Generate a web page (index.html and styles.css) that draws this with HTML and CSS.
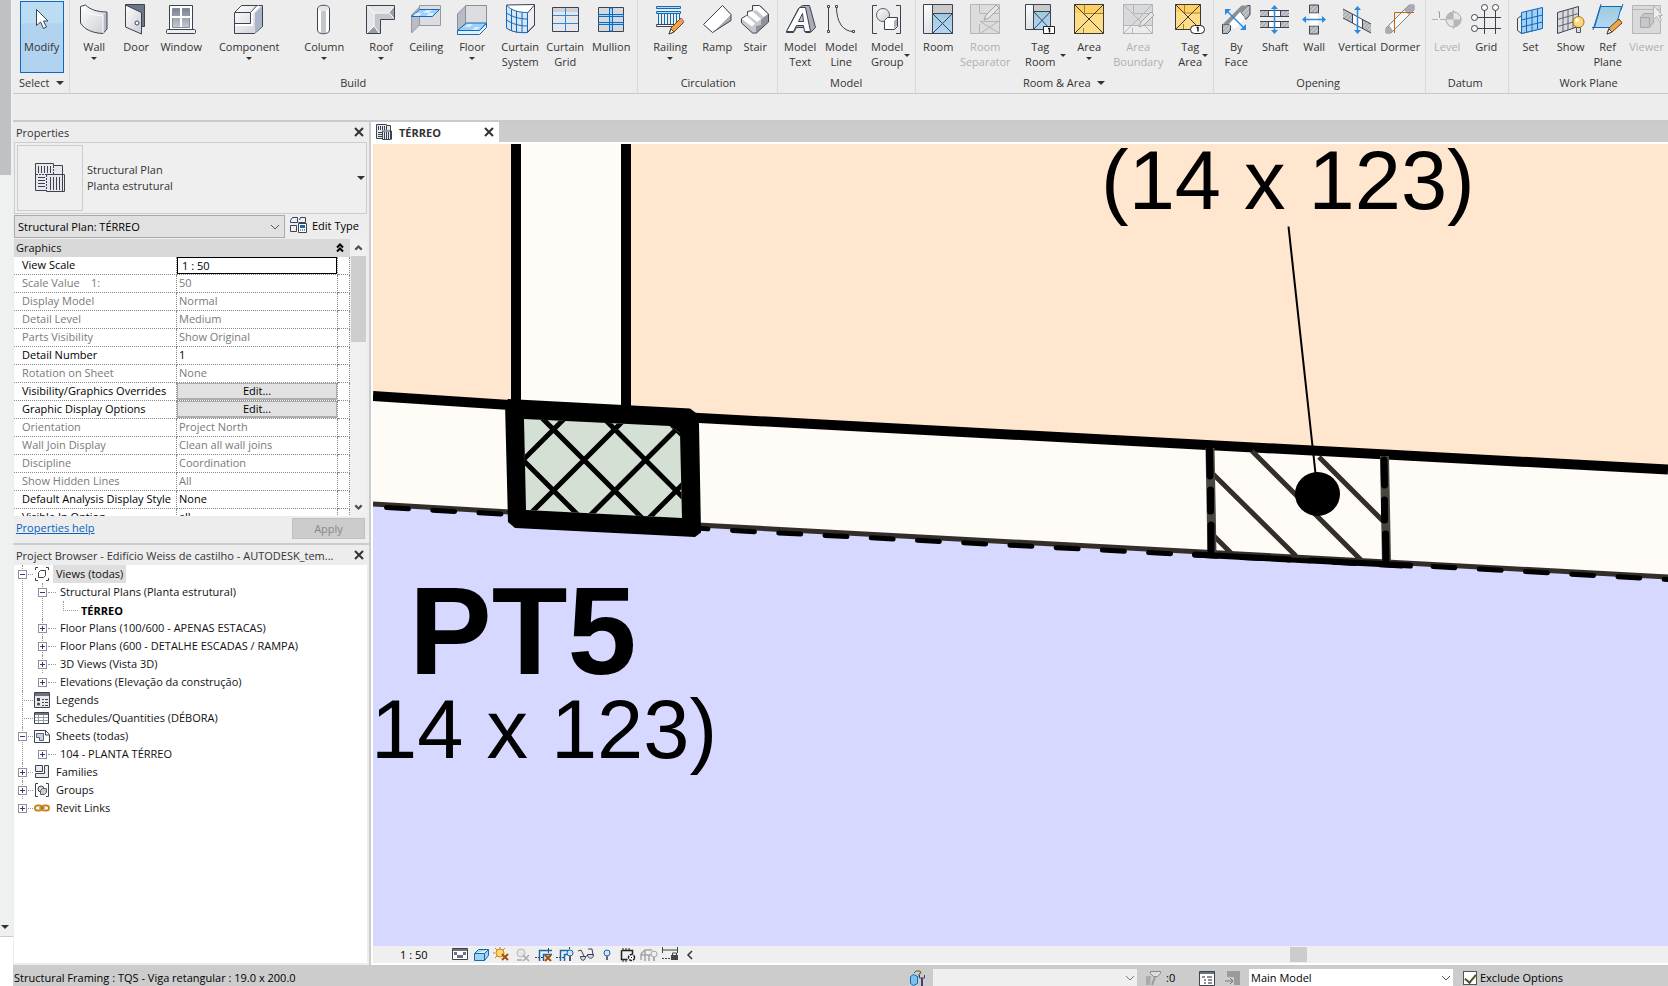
FILE: index.html
```html
<!DOCTYPE html>
<html lang="en">
<head>
	<meta charset="UTF-8">
	<title>Structural Plan: TÉRREO</title>
	<link rel="stylesheet" href="styles.css">
</head>
<body>
<svg class="defs" aria-hidden="true">
	<defs>
		<linearGradient id="gray" x1="0" y1="0" x2="1" y2="1"><stop offset="0" stop-color="#fff"/><stop offset="1" stop-color="#c9ccd3"/></linearGradient>
		<linearGradient id="blue" x1="0" y1="0" x2="0" y2="1"><stop offset="0" stop-color="#9ccbdc"/><stop offset="1" stop-color="#b5d6f6"/></linearGradient>
		<linearGradient id="dark" x1="0" y1="0" x2="0" y2="1"><stop offset="0" stop-color="#78819a"/><stop offset="1" stop-color="#c4c9d2"/></linearGradient>
		<pattern id="hatch" width="3" height="3" patternUnits="userSpaceOnUse" patternTransform="rotate(45)"><rect width="3" height="3" fill="#c3c6ca"/><path d="M0 0V3" stroke="#777b83"/></pattern>
	</defs>
</svg>
<div class="page">
	<div class="sideStrip">
		<div class="sideThumb"></div>
		<div class="sideTrack"><i class="caret"></i></div>
		<div class="sideEnd"></div>
	</div>
	<div class="app">
		<div class="ribbon">
			<section class="panel selectPanel">
				<div class="tools">
					<button class="tool w44 active"><svg class="ico" viewBox="0 0 32 32"><path d="M10.500 5.500v16l4-3.500 3 6.500 3-1.500-3-6h4.500z" fill="#fff" stroke="#3c4250"/></svg>Modify</button>
				</div>
				<button class="panelTitle">Select <i class="caret"></i></button>
			</section>
			<section class="panel">
				<div class="tools">
					<button class="tool w48"><svg class="ico" viewBox="0 0 32 32"><path d="M2.500 2.500l5-1.500c5 5 13 7 21.500 7v17l-4 4.500C15 29 7 26 2.500 19z" fill="url(#gray)"/><path d="M25 11.500l4-3.500v17l-4 4.500z" fill="#b4bac4"/><path d="M2.500 2.500l5-1.500c5 5 13 7 21.500 7v17l-4 4.500C15 29 7 26 2.500 19z" fill="none" stroke="#3c4250"/><path d="M3 3c5 6 12 8.500 22 8.500V29" fill="none" stroke="#fff"/></svg>Wall<i class="drop"></i></button>
					<button class="tool w36"><svg class="ico" viewBox="0 0 32 32"><path d="M5.500.500h19v22h-19z" fill="#6d7686" stroke="#3c4250"/><path d="M5.500 1l16 7.500v21.500l-16-7z" fill="url(#gray)" stroke="#3c4250"/><circle cx="17" cy="19" r="2" fill="#fff" stroke="#3c4250"/></svg>Door</button>
					<button class="tool w54"><svg class="ico" viewBox="0 0 32 32"><path d="M4.500 1.500h23v24h-23z" fill="#fff" stroke="#3c4250"/><path d="M7.500 4.500h17v19h-17z" fill="url(#dark)" stroke="#858b98"/><path d="M16 4v19M7 13h18" stroke="#fff" stroke-width="2"/><rect x="1.500" y="25.500" width="29" height="4" rx="1" fill="#eee" stroke="#3c4250"/></svg>Window</button>
					<button class="tool w82"><svg class="ico" viewBox="0 0 32 32"><path d="M1.500 29.500v-21l7-7h21v21l-8 7z" fill="url(#gray)" stroke="#3c4250"/><path d="M22 9l7-7v20l-7 7z" fill="#a9b4c6"/><path d="M1.500 19.500h16v-11l6-6.500M17 8.500H2" fill="none" stroke="#3c4250"/><path d="M2 21h17V9l7-7" fill="none" stroke="#fff" stroke-width="2"/></svg>Component<i class="drop"></i></button>
					<button class="tool w68"><svg class="ico" viewBox="0 0 32 32"><path d="M9.500 5c0-5 12-5 12 0v21c0 5-12 5-12 0z" fill="#fff" stroke="#3c4250"/><path d="M13 7h5v22h-5z" fill="#c3c7c9"/><ellipse cx="15.500" cy="4.500" rx="5" ry="2.500" fill="#e3e5e9"/></svg>Column<i class="drop"></i></button>
					<button class="tool w46"><svg class="ico" viewBox="0 0 32 32"><path d="M1.500 1.500h28v14h-14v14h-14z" fill="#e4e6ea"/><path d="M24 8.500l5-6v12z" fill="#a4a8b0"/><path d="M9 22l5 7H2z" fill="#858a94"/><path d="M9 9v13l5 7h1V15h14l-5-6.500z" fill="#c3c6cc"/><path d="M24 8.500l5-6v12zM9 22l5 7H2z" fill="#9a9ea7"/><path d="M2 2l7 7h15M9 9v13l-7 7M9 22l5 7M24 8.500l5 6M24 8.500l5-6" stroke="#fff" fill="none"/><path d="M1.500 1.500h28v14h-14v14h-14z" fill="none" stroke="#3c4250"/></svg>Roof<i class="drop"></i></button>
					<button class="tool w44"><svg class="ico" viewBox="0 0 32 32"><path d="M9.500 1.500h21v20h-21z" fill="#dcdde0" stroke="#9699a0"/><path d="M1.500 11l8-8v18l-8 8z" fill="#b8bcc6" stroke="#9699a0"/><path d="M1.500 12.500l8-7h20l-7 7z" fill="#9dd0ff" stroke="#1468b4"/><path d="M6 9h6l-3 3H3zM16 6h6l-3 3h-6zM19 9h5l-2 3h-6z" fill="#d9edff"/></svg>Ceiling</button>
					<button class="tool w48"><svg class="ico" viewBox="0 0 32 32"><path d="M9.500 1.500h21v18h-21z" fill="#dcdde0" stroke="#8b8e95"/><path d="M1.500 10l8-8v17l-8 8z" fill="#b8bcc6" stroke="#8b8e95"/><path d="M1.500 26.500l9-7.500h20l-7 7.500z" fill="#9dd0ff" stroke="#1468b4"/><path d="M1.500 26.500h22l7-7v4l-7 7h-22z" fill="#e2f1ff" stroke="#1468b4"/><path d="M12 20h5l-3 3H9zM19 23h5l-3 3h-5z" fill="#d9edff"/></svg>Floor<i class="drop"></i></button>
					<button class="tool w48"><svg class="ico" viewBox="0 0 32 32"><path d="M2.500 1v23c6 4 13 5 21 4.500l7-7V.500z" fill="#fff" stroke="#3c4250"/><path d="M23.500 9l7-8v20l-7 7z" fill="#eceef1" stroke="#3c4250"/><path d="M2.500 1c5 6 13 7.500 21 7.500v20C15 29 8 28 2.500 24z" fill="#d9e6f2" stroke="#0f69c0"/><path d="M2.500 9c6 4 13 6 21 6M2.500 16c6 4 13 6 21 6M7.500 5v21M12.500 7v21M18 8v20" fill="none" stroke="#0f69c0"/></svg>Curtain<br>System</button>
					<button class="tool w42"><svg class="ico" viewBox="0 0 32 32"><path d="M3.500 3.500h26v24h-26z" fill="#e6e7ea" stroke="#3c4250"/><path d="M4 4h25v4H4z" fill="#d0d1d4"/><path d="M16.500 4v23M4 11.500h25M4 19.500h25" stroke="#2a8ae0"/></svg>Curtain<br>Grid</button>
					<button class="tool w50"><svg class="ico" viewBox="0 0 32 32"><path d="M3.500 3.500h25v24h-25z" fill="#d5d8dc" stroke="#3c4250"/><path d="M3.500 10.500h25v2h-25zM3.500 18.500h25v2h-25zM14.500 4h3v23h-3z" fill="#a6d5f7" stroke="#0f69c0"/></svg>Mullion</button>
				</div>
				<div class="panelTitle">Build</div>
			</section>
			<section class="panel padded">
				<div class="tools">
					<button class="tool w48"><svg class="ico" viewBox="0 0 32 32"><path d="M2.500 2.500h24v2h-24zM2.500 7.500h24v2h-24z" fill="#b5dcfa" stroke="#1468b4"/><path d="M4.500 9v11M7.500 9v11M10.500 9v11M13.500 9v11M16.500 9v11M19.500 9v11M22.500 9v9M25.500 9v8" stroke="#1468b4"/><path d="M2.500 20.500h18v2h-18z" fill="#fff" stroke="#3c4250"/><path d="M15 30l2-6 10-10 3 4-10 10z" fill="#f2a546" stroke="#6d4018"/><path d="M15 30l2-5 3 3z" fill="#fff" stroke="#444"/><path d="M26 15l2-1 2 3-1 2z" fill="#d88"/></svg>Railing<i class="drop"></i></button>
					<button class="tool w46"><svg class="ico" viewBox="0 0 32 32"><path d="M2.500 20.500L21.500 1.500l8.500 9v6l-18 12z" fill="#a9acb4"/><path d="M2.500 20.500L21.500 1.500l8.500 9-18 18z" fill="#fff"/><path d="M2.500 20.500L21.500 1.500l8.500 9v6l-18.500 12z" fill="none" stroke="#3c4250"/></svg>Ramp</button>
					<button class="tool w30"><svg class="ico" viewBox="0 0 32 32"><path d="M2.500 14.500l5-3 5 1v-5l5-1V1.500h5l7 8.500v8l-12 11h-4l-11-10z" fill="#c6c8ce"/><path d="M2 14.500l5-3 9 8-3 3zM8 10l5-3 9 8-4 3zM15 4l4-3 10 9-4 3z" fill="#fff"/><path d="M25 13l4-3v8L17 29v-7l5-1v-5z" fill="#8e929b"/><path d="M2.500 14.500l5-3h1v-4l5-1V1.500h7l9 8.500v8l-12 11h-4l-11-10z" fill="none" stroke="#3c4250"/></svg>Stair</button>
				</div>
				<div class="panelTitle">Circulation</div>
			</section>
			<section class="panel">
				<div class="tools">
					<button class="tool w44"><svg class="ico" viewBox="0 0 32 32"><path d="M2.500 27.500l12-23 4-3h7l6 22-5 5h-5l-1-5h-8l-3 5h-7z" fill="#a7acb7" stroke="#3c4250"/><path d="M2.500 27.500l13-24h6l5 24h-6l-1-6h-7l-3 6z" fill="#fff" stroke="#3c4250"/><path d="M14.500 17.500l4-8 1 8z" fill="#c1c5cc" stroke="#3c4250"/></svg>Model<br>Text</button>
					<button class="tool w38"><svg class="ico" viewBox="0 0 32 32"><path d="M3.500 3v24M11.500 3c0 16 7 24 16 24.500" fill="none" stroke="#3c4250"/><path d="M2.500 1.500h2v2h-2zM2.500 26.500h2v2h-2zM10.500 1.500h2v2h-2zM27.500 26.500h2v2h-2z" fill="#fff" stroke="#3c4250"/></svg>Model<br>Line</button>
					<button class="tool w54 side"><svg class="ico" viewBox="0 0 32 32"><path d="M6 1.500H1.500v28H6M25 1.500h4.500v28H25" fill="none" stroke="#3c4250"/><circle cx="12" cy="11" r="6.500" fill="url(#gray)" stroke="#5b606c"/><path d="M13.500 16.500l3-3h10v9l-3 3h-10z" fill="#fff" stroke="#3c4250"/><path d="M23 17l3-3v8l-3 3z" fill="#aeb3be"/></svg>Model<br>Group<i class="drop"></i></button>
				</div>
				<div class="panelTitle">Model</div>
			</section>
			<section class="panel">
				<div class="tools">
					<button class="tool w44"><svg class="ico" viewBox="0 0 32 32"><path d="M1.500.500h29v29h-29z" fill="url(#gray)" stroke="#3c4250"/><path d="M11 1h19v8H11z" fill="#c9cacc"/><path d="M10.500 1v8M10.500 21v9" stroke="#3c4250"/><path d="M10.500 9.500h20v20h-20z" fill="url(#blue)" stroke="#3c4250"/><path d="M10.500 9.500l20 20M30.500 9.500l-20 20" stroke="#3c4250"/></svg>Room</button>
					<button class="tool w50" disabled><svg class="ico" viewBox="0 0 32 32"><path d="M1.500.500h29v29h-29z" fill="#dcdcdd" stroke="#b4b5b8"/><path d="M10.500 1v8M10.500 20v9M11 9.500h19M11 17.500h19M12 29l18-12M12 18l18 11" stroke="#b4b5b8"/><path d="M15 16l2-5L27 1l3 3-10 10z" fill="#e6e6e6" stroke="#a2a3a6"/></svg>Room<br>Separator</button>
					<button class="tool w60 side"><svg class="ico" viewBox="0 0 32 32"><path d="M1.500.500h25v25h-25z" fill="url(#gray)" stroke="#3c4250"/><path d="M9 1h17v6H9z" fill="#c9cacc"/><path d="M9.500 1v7M9.500 18v8" stroke="#3c4250"/><path d="M9.500 7.500h17v18h-17z" fill="url(#blue)" stroke="#3c4250"/><path d="M9.500 7.500l17 18M26.500 7.500l-17 18" stroke="#3c4250"/><path d="M19.500 22.500h11v7h-11z" fill="#fff" stroke="#222"/><path d="M24 24.500h1.500v4" fill="none" stroke="#111" stroke-width="1.400"/></svg>Tag<br>Room<i class="drop"></i></button>
					<button class="tool w38"><svg class="ico" viewBox="0 0 32 32"><path d="M1.500.500h29v29h-29z" fill="#ffdd87"/><path d="M2 1h28v8H2z" fill="#ffd060"/><path d="M11.500 1v8.500H30M10.500 24v5" stroke="#a3812f" fill="none"/><path d="M1.500.500h29v29h-29zM1.500.500l29 29M30.500.500l-29 29" stroke="#3c3a38" fill="none"/></svg>Area<i class="drop"></i></button>
					<button class="tool w60" disabled><svg class="ico" viewBox="0 0 32 32"><path d="M1.500.500h29v29h-29z" fill="#d8d9da"/><path d="M2 22h28v7H2z" fill="#ececec"/><path d="M1.500.500h29v29h-29zM1.500.500l29 29M30.500.500l-29 29M11.500 1v8.500H30M2 21.500h28M10.500 24v5" stroke="#b4b5b8" fill="none"/><path d="M17 23l2-5L29 8l3 3-10 10z" fill="#e6e6e6" stroke="#a2a3a6"/></svg>Area<br>Boundary</button>
					<button class="tool w44 side"><svg class="ico" viewBox="0 0 32 32"><path d="M1.500.500h25v25h-25z" fill="#ffdd87"/><path d="M2 1h24v7H2z" fill="#ffd060"/><path d="M10.500 1v8H26M9.500 20v5" stroke="#a3812f" fill="none"/><path d="M1.500.500h25v25h-25zM1.500.500l25 25M26.500.500l-25 25" stroke="#3c3a38" fill="none"/><rect x="16.500" y="21.500" width="14" height="8" rx="4" fill="#fff" stroke="#222"/><path d="M22.500 23.500H24v4" fill="none" stroke="#111" stroke-width="1.400"/></svg>Tag<br>Area<i class="drop"></i></button>
				</div>
				<button class="panelTitle">Room &amp; Area <i class="caret"></i></button>
			</section>
			<section class="panel openingPanel">
				<div class="tools">
					<button class="tool w42"><svg class="ico" viewBox="0 0 32 32"><path d="M2.500 20.500h8v6l-3 3h-5zM21 8.500l6-7h3v9l-4 5z" fill="url(#hatch)" stroke="#3c4250"/><path d="M2.500 20.500l19-19h7l-18 19z" fill="#8c9097"/><path d="M9 20L20 8l5 6-10 11z" fill="#fff"/><path d="M7 7l17 17" stroke="#2a8ae0" stroke-width="1.500"/><path d="M5 5h6l-6 6zM26 26h-6l6-6z" fill="#2a8ae0"/></svg>By<br>Face</button>
					<button class="tool w36"><svg class="ico" viewBox="0 0 32 32"><path d="M1 6.500h8v6H1zM22 6.500h8v6h-8zM1 17.500h8v6H1zM22 17.500h8v6h-8z" fill="url(#hatch)"/><path d="M9 6h13v7H9zM9 17h13v7H9z" fill="#fff"/><path d="M1 6.500h29M1 12.500h29M1 17.500h29M1 23.500h29M9.500 6v7M21.500 6v7M9.500 17v7M21.500 17v7" stroke="#3c4250"/><path d="M15.500 3v24" stroke="#2a8ae0" stroke-width="1.500"/><path d="M12 5l3.500-4L19 5zM12 26l3.500 4 3.500-4z" fill="#2a8ae0"/></svg>Shaft</button>
					<button class="tool w42"><svg class="ico" viewBox="0 0 32 32"><path d="M11.500 1v8h9V1zM11.500 30v-8h9v8z" fill="url(#hatch)" stroke="#3c4250"/><path d="M12 9.500h8v12h-8z" fill="#fff"/><path d="M6 15.500h20" stroke="#2a8ae0" stroke-width="1.500"/><path d="M8 12l-4 3.500L8 19zM24 12l4 3.500L24 19z" fill="#2a8ae0"/></svg>Wall</button>
					<button class="tool w44"><svg class="ico" viewBox="0 0 32 32"><path d="M2 5l9 5v9l-9-5zM21 15l9 5v9l-9-5z" fill="url(#hatch)"/><path d="M11 10l10 5v9l-10-5z" fill="#fff"/><path d="M2 5l28 15M2 14l28 15M11.500 10v9M21.500 15v9" stroke="#3c4250"/><path d="M16.500 4v24" stroke="#2a8ae0" stroke-width="1.500"/><path d="M13 6l3.500-4L20 6zM13 26l3.500 4 3.500-4z" fill="#2a8ae0"/></svg>Vertical</button>
					<button class="tool w42"><svg class="ico" viewBox="0 0 32 32"><path d="M2 29v-5L25 1h5v5L7 29z" fill="#f8f8f8" stroke="#7d8087"/><path d="M2 24l3-3 4 6-2 2H2zM20 6l5-5h5v5l-5 5z" fill="#a9acb2"/><path d="M10.500 29V8.500H30" fill="none" stroke="#c0680e"/></svg>Dormer</button>
				</div>
				<div class="panelTitle">Opening</div>
			</section>
			<section class="panel datumPanel">
				<div class="tools">
					<button class="tool w42" disabled><svg class="ico" viewBox="0 0 32 32"><path d="M1 15.500h30M22.500 6v19" stroke="#b0b1b4" stroke-dasharray="6 2"/><circle cx="22.500" cy="15.500" r="7.500" fill="#e6e6e6" stroke="#a5a6a9"/><path d="M22.500 8a7.500 7.500 0 0 0-7.500 7.500h15a7.500 7.500 0 0 1-7.500 7.500z" fill="#b5b6b9"/><path d="M7 8h1.500v6" fill="none" stroke="#9a9b9e"/></svg>Level</button>
					<button class="tool w36"><svg class="ico" viewBox="0 0 32 32"><path d="M14.500 6v24M25.500 6v24M7 13.500h24M7 24.500h24" stroke="#3c4250"/><g fill="#fff" stroke="#3c4250"><circle cx="14.500" cy="3.500" r="3"/><circle cx="25.500" cy="3.500" r="3"/><circle cx="4.500" cy="13.500" r="3"/><circle cx="4.500" cy="24.500" r="3"/></g></svg>Grid</button>
				</div>
				<div class="panelTitle">Datum</div>
			</section>
			<section class="panel workPanel">
				<div class="tools">
					<button class="tool w42"><svg class="ico" viewBox="0 0 32 32"><path d="M2.500 26.500v-12l4-3 20-6v19l-20 5z" fill="#eee" stroke="#3c4250"/><path d="M6.500 8.500l21-5v21l-21 5z" fill="#a2cff2" stroke="#0f69c0"/><path d="M6.500 16l21-5M6.500 23l21-5M11.500 7v21M17 6v21M22.500 5v21" stroke="#0f69c0"/></svg>Set</button>
					<button class="tool w38"><svg class="ico" viewBox="0 0 32 32"><path d="M2.500 8.500l21-6v20l-21 7z" fill="#d9dadd" stroke="#3c4250"/><path d="M2.500 15.500l21-6M2.500 22.500l21-6M8 7v21M13 5v21M18 4v20" stroke="#5f646f"/><circle cx="23.500" cy="18" r="5.500" fill="#ffd774" stroke="#a87618"/><circle cx="22" cy="16" r="2" fill="#fff"/><path d="M21.500 23.500h4v5h-4z" fill="#ddd" stroke="#555"/></svg>Show</button>
					<button class="tool w36"><svg class="ico" viewBox="0 0 32 32"><path d="M8.500 2.500h21l-6 21h-21z" fill="url(#blue)" stroke="#0f69c0"/><path d="M9 0L1 26M31 0l-2 6M0 23.500h6" stroke="#1468b4"/><path d="M15 30l2-6 10-9 3 4-10 9z" fill="#f2a546" stroke="#6d4018"/><path d="M15 30l2-5 3 3z" fill="#fff" stroke="#444"/></svg>Ref<br>Plane</button>
					<button class="tool w42" disabled><svg class="ico" viewBox="0 0 32 32"><path d="M1.500 1.500h28v28h-28z" fill="#dadadb" stroke="#b5b6b9"/><path d="M2 5.500h27" stroke="#b5b6b9"/><path d="M9.500 13.500l3-4h10v9l-4 5h-9z" fill="#c6c7ca" stroke="#a5a6a9"/><path d="M9.500 13.500h9v9" fill="none" stroke="#a5a6a9"/><path d="M22.500 1.500v14l3-3 3 5 2-1-3-5h4z" fill="#eee" stroke="#b5b6b9"/></svg>Viewer</button>
				</div>
				<div class="panelTitle">Work Plane</div>
			</section>
		</div>
		<div class="optionsBar"></div>

		<div class="main">
			<aside class="dock">
				<div class="properties">
					<div class="dockTitle"><span>Properties</span><button class="close" aria-label="Close Properties"><svg viewBox="0 0 10 10"><path d="M1 1l8 8M9 1L1 9"/></svg></button></div>
					<div class="typeBox">
						<div class="thumb"><svg viewBox="0 0 32 32"><path d="M1.500 1.500h18v2h9v26h-16v-1h-11z" fill="#e7e8ee" stroke="#3c4250"/><path d="M4.500 4v7M7.500 4v7M10.500 4v7M13.500 4v7M16.500 4v7M4 15.500h7M4 18.500h7M4 21.500h7M4 24.500h7M16.500 15v13M19.500 15v13M22.500 15v13M25.500 15v13M28.500 15v13M12 12.500h18.500v17H13" fill="none" stroke="#3c4250"/><path d="M2 12.500h10M12.500 13v16M19.500 4v9" fill="none" stroke="#3c4250" stroke-dasharray="2 1"/></svg></div>
						<div class="typeName">Structural Plan<br>Planta estrutural</div>
						<i class="caret"></i>
					</div>
					<div class="filterRow">
						<select class="filter" aria-label="Properties filter"><option>Structural Plan: TÉRREO</option></select>
						<button class="editType"><svg viewBox="0 0 17 17"><path d="M.500 3.500l2-3h5v5h-7zM9.500 3l1-2.500h5v5h-7M.500 8.500h6v6h-6z" fill="#eef" stroke="#3c4250"/><path d="M8.500 6.500h8v9h-8z" fill="#fff" stroke="#3c4250"/><path d="M10 8h5v3h-5z" fill="#1468c0"/><path d="M10 13h1M12 13h1M14 13h1" stroke="#222"/></svg>Edit Type</button>
					</div>
					<div class="gridArea">
						<div class="gridScroll">
							<table class="propTab">
								<colgroup><col><col class="valueCol"><col class="moreCol"></colgroup>
								<thead>
									<tr><th colspan="3"><div class="groupHead">Graphics<svg viewBox="0 0 8 10"><path d="M1 4.500l3-3 3 3M1 8.500l3-3 3 3"/></svg></div></th></tr>
								</thead>
								<tbody>
									<tr class="on"><td><label for="viewScale">View Scale</label></td><td class="field"><input id="viewScale" type="text" value="1 : 50"></td><td></td></tr>
									<tr><td>Scale Value &nbsp;&nbsp; 1:</td><td>50</td><td></td></tr>
									<tr><td>Display Model</td><td>Normal</td><td></td></tr>
									<tr><td>Detail Level</td><td>Medium</td><td></td></tr>
									<tr><td>Parts Visibility</td><td>Show Original</td><td></td></tr>
									<tr class="on"><td>Detail Number</td><td>1</td><td></td></tr>
									<tr><td>Rotation on Sheet</td><td>None</td><td></td></tr>
									<tr class="on"><td>Visibility/Graphics Overrides</td><td class="field"><button class="editBtn">Edit...</button></td><td></td></tr>
									<tr class="on"><td>Graphic Display Options</td><td class="field"><button class="editBtn">Edit...</button></td><td></td></tr>
									<tr><td>Orientation</td><td>Project North</td><td></td></tr>
									<tr><td>Wall Join Display</td><td>Clean all wall joins</td><td></td></tr>
									<tr><td>Discipline</td><td>Coordination</td><td></td></tr>
									<tr><td>Show Hidden Lines</td><td>All</td><td></td></tr>
									<tr class="on"><td>Default Analysis Display Style</td><td>None</td><td></td></tr>
									<tr class="on"><td>Visible In Option</td><td>all</td><td></td></tr>
								</tbody>
							</table>
						</div>
						<div class="scrollBar">
							<svg viewBox="0 0 16 16"><path d="M5 10l3-3 3 3"/></svg>
							<div class="scrollThumb"></div>
							<svg viewBox="0 0 16 16"><path d="M5 6l3 3 3-3"/></svg>
						</div>
					</div>
					<div class="propFoot"><a href="#">Properties help</a><button class="apply" disabled>Apply</button></div>
				</div>

				<div class="browser">
					<div class="dockTitle"><span>Project Browser - Edifício Weiss de castilho - AUTODESK_tem...</span><button class="close" aria-label="Close Project Browser"><svg viewBox="0 0 10 10"><path d="M1 1l8 8M9 1L1 9"/></svg></button></div>
					<ul class="tree">
						<li>
							<div class="row"><i class="toggle open"></i><i class="dots"></i><svg viewBox="0 0 16 16"><path d="M4 1.500H1.500V4M12 1.500h2.500V4M4 14.500H1.500V12M12 14.500h2.500V12M4.500 6.500l2-2h5v5l-2 2h-5z" fill="none" stroke="#3c4250"/></svg><span class="picked">Views (todas)</span></div>
							<ul>
								<li>
									<div class="row"><i class="toggle open"></i><i class="dots"></i><span>Structural Plans (Planta estrutural)</span></div>
									<ul class="leaf"><li><div class="row"><i class="elbow"></i><b>TÉRREO</b></div></li></ul>
								</li>
								<li><div class="row"><i class="toggle"></i><i class="dots"></i><span>Floor Plans (100/600 - APENAS ESTACAS)</span></div></li>
								<li><div class="row"><i class="toggle"></i><i class="dots"></i><span>Floor Plans (600 - DETALHE ESCADAS / RAMPA)</span></div></li>
								<li><div class="row"><i class="toggle"></i><i class="dots"></i><span>3D Views (Vista 3D)</span></div></li>
								<li><div class="row"><i class="toggle"></i><i class="dots"></i><span>Elevations (Elevação da construção)</span></div></li>
							</ul>
						</li>
						<li><div class="row single"><i class="dots"></i><svg viewBox="0 0 16 16"><path d="M.500.500h15v15H.500z" fill="#e9eaec" stroke="#3c4250"/><path d="M1 1h14v3H1z" fill="#6c727e"/><path d="M3 6h3v3H3z" fill="#3c4250"/><circle cx="4.500" cy="12" r="1.500" fill="#3c4250"/><path d="M8 7.500h2M11 7.500h3M8 10.500h2M11 10.500h3M8 13.500h2M11 13.500h3" stroke="#3c4250"/></svg><span>Legends</span></div></li>
						<li><div class="row single"><i class="dots"></i><svg viewBox="0 0 16 16"><path d="M.500 2.500h14v11H.500z" fill="#fff" stroke="#3c4250"/><path d="M1 3h13v2H1z" fill="#6c727e"/><path d="M1 7.500h13M1 10.500h13M4.500 5v8M9.500 5v8" stroke="#9a9ea7"/></svg><span>Schedules/Quantities (DÉBORA)</span></div></li>
						<li>
							<div class="row"><i class="toggle open"></i><i class="dots"></i><svg viewBox="0 0 16 16"><path d="M.500 2.500h11l4 4v8H.500z" fill="#fff" stroke="#3c4250"/><path d="M11.500 2v5H15" fill="none" stroke="#3c4250"/><path d="M2.500 5.500h7v7h-4v-3h-3z" fill="#c7d3e6" stroke="#5b606c"/></svg><span>Sheets (todas)</span></div>
							<ul><li><div class="row"><i class="toggle"></i><i class="dots"></i><span>104 - PLANTA TÉRREO</span></div></li></ul>
						</li>
						<li><div class="row"><i class="toggle"></i><i class="dots"></i><svg viewBox="0 0 16 16"><path d="M1.500 1.500h7v6h-7zM10.500 1.500h4v12h-13v-4h9z" fill="#e9eaec" stroke="#3c4250"/></svg><span>Families</span></div></li>
						<li><div class="row"><i class="toggle"></i><i class="dots"></i><svg viewBox="0 0 16 16"><path d="M4 1.500H1.500v13H4M12 1.500h2.500v13H12" fill="none" stroke="#3c4250"/><circle cx="7" cy="7" r="3" fill="#ddd" stroke="#3c4250"/><path d="M6.500 8.500l2-2h4v4l-2 2h-4z" fill="#c9ccd3" stroke="#5b606c"/></svg><span>Groups</span></div></li>
						<li><div class="row"><i class="toggle"></i><i class="dots"></i><svg viewBox="0 0 16 16"><g fill="none" stroke="#c9851a" stroke-width="2"><rect x="1" y="5.500" width="7" height="5" rx="2.500"/><rect x="8" y="5.500" width="7" height="5" rx="2.500"/></g><path d="M5 8h6" stroke="#7c4f0c"/></svg><span>Revit Links</span></div></li>
					</ul>
				</div>
			</aside>

			<div class="view">
				<div class="tabBar">
					<div class="tab"><svg viewBox="0 0 16 16"><path d="M.500.500h10v1h4v14h-8v-1h-6z" fill="#e7e8ee" stroke="#3c4250"/><path d="M2.500 2v4M4.500 2v4M6.500 2v4M8.500 2v4M10.500 2v4M2 8.500h4M2 10.500h4M2 12.500h4M6.500 7h9v8.500M6.500 7v8M8.500 8v7M10.500 8v7M12.500 8v7" fill="none" stroke="#3c4250"/></svg><b>TÉRREO</b><button class="close" aria-label="Close view"><svg viewBox="0 0 10 10"><path d="M1 1l8 8M9 1L1 9"/></svg></button></div>
				</div>
				<svg class="drawing" viewBox="373 144 1295 802" preserveAspectRatio="xMinYMin slice">
					<!-- slabs -->
					<path class="slabTop" d="M373 144h1295v326L373 396z"/>
					<path class="slabBottom" d="M373 504l327 22 968 52v368H373z"/>
					<!-- beams -->
					<path class="beam" d="M373 396l325 22 970 52v108l-968-52-327-22zM516 144h110v270H516z"/>
					<path class="edge" d="M516 144v262M626 144v265M373 396l137 9M690 417.500l978 52"/>
					<path class="faint" d="M373 504l137 8M698 525l970 52"/>
					<path class="dash" d="M386.500 507.500l130 7.500M686 527.500l24 1.500M732.500 530.500l680 36"/>
					<path class="dash" d="M1433 566.500l235 13"/>
					<!-- pillar PT5 -->
					<path d="M505 403l3-4 182 9.500 8 6 1 10 2 108-6 4.500-180-9-7-6z"/>
					<clipPath id="pillar"><path d="M524 419l146 7 10 7 2 85-156-8z"/></clipPath>
					<g clip-path="url(#pillar)">
						<path class="pillarFill" d="M520 410h170v120H520z"/>
						<path class="cross" d="M463 400l140 140M524 400l140 140M585.500 400l140 140M647 400l140 140M583 400L443 540M644 400L504 540M705.500 400l-140 140M767 400L627 540"/>
					</g>
					<!-- hatched opening -->
					<path class="hatchLine" d="M1212 473l84 83M1252 451l109 109M1319 457l65 65M1212 534l19 19"/>
					<path class="jamb" d="M1210 448l2 106M1384.500 456l2 107"/>
					<path class="jambDash" d="M1209.500 450l.5 26M1210.500 490v21M1211 525v27M1384 460l.5 25M1384.500 500v20M1385.500 534l.5 28"/>
					<path class="sill" d="M1195 554.500l94 5M1311 560.500l99 5"/>
					<ellipse cx="1317.500" cy="494" rx="22.500" ry="22"/>
					<path class="leader" d="M1288.500 226.500l27 247"/>
					<text class="size" x="1101" y="209">(14 x 123)</text>
					<text class="mark" x="409" y="674">PT5</text>
					<text class="size" x="371" y="758">14 x 123)</text>
				</svg>
				<div class="viewBar">
					<span class="scale">1 : 50</span>
					<button aria-label="Detail level"><svg viewBox="0 0 18 16"><path d="M1.500 1.500h15v11h-15z" fill="#fff" stroke="#3c4250"/><path d="M2 2h14v2H2zM3 5h3v3H3zM12 5h3v3h-3zM6 8h6v3H6z" fill="#6c727e"/></svg></button>
					<button aria-label="Visual style"><svg viewBox="0 0 18 16"><path d="M2.500 6.500l4-4h10v6l-4 5h-10zM2.500 6.500h10l4-4M12.500 6.500v7" fill="#9fd3f2" stroke="#1468b4"/></svg></button>
					<button aria-label="Sun path"><svg viewBox="0 0 18 16"><circle cx="7" cy="6" r="4" fill="#ffd774" stroke="#c9851a"/><path d="M7 0v2M0 6h2M2 1l2 2M12 1l-2 2M2 11l2-2" stroke="#c9851a"/><path d="M9 7l6 6M15 7l-6 6" stroke="#a4500c" stroke-width="2"/></svg></button>
					<button aria-label="Shadows"><svg viewBox="0 0 18 16"><circle cx="7" cy="6" r="4" fill="#e6e6e6" stroke="#b9b9b9"/><path d="M3 13h5M9 8l6 6M15 8l-6 6" stroke="#aaa" stroke-width="1.500"/></svg></button>
					<button aria-label="Crop view"><svg viewBox="0 0 18 16"><path d="M4.500 14V3.500H17M8.500 14V7.500H17" fill="none" stroke="#1468b4" stroke-width="1.500"/><path d="M0 10.500h8M13.500 1v6" stroke="#3c4250" stroke-dasharray="2 1"/><path d="M10 8l6 6M16 8l-6 6" stroke="#a4500c" stroke-width="2"/></svg></button>
					<button aria-label="Show crop region"><svg viewBox="0 0 18 16"><path d="M4.500 14V3.500H14M8.500 14V7.500H12" fill="none" stroke="#1468b4" stroke-width="1.500"/><path d="M0 10.500h8M13.500 0v3" stroke="#3c4250" stroke-dasharray="2 1"/><circle cx="14" cy="6" r="3" fill="#cfe8ff" stroke="#1468b4"/><path d="M13 9h2v5h-2z" fill="#556"/></svg></button>
					<button aria-label="Hide or isolate"><svg viewBox="0 0 18 16"><path d="M1 4l3-1 3 6M11 2h4l1 6M8 10l3-2" fill="none" stroke="#3c4250"/><path d="M3.500 9.500h5c0 5-5 5-5 0zM10.500 7.500h6c0 5-6 5-6 0z" fill="#cde" stroke="#3c4250"/></svg></button>
					<button aria-label="Reveal hidden elements"><svg viewBox="0 0 18 16"><circle cx="9" cy="6" r="3" fill="#cfe8ff" stroke="#1468b4"/><path d="M8 9h2v4H8z" fill="#667"/></svg></button>
					<button aria-label="Temporary view properties"><svg viewBox="0 0 18 16"><path d="M2.500 3.500h11v4M2.500 3.500v9h6" fill="none" stroke="#222" stroke-width="1.500"/><path d="M4 1v2M7 1v2M10 1v2M4 13v2M7 13v2" stroke="#222"/><circle cx="12.500" cy="10.500" r="3" fill="#fff" stroke="#222" stroke-width="1.500" stroke-dasharray="3 1"/><path d="M12 10h1v1h-1z"/></svg></button>
					<button aria-label="Analytical model"><svg viewBox="0 0 18 16"><path d="M1 13V7l4-4h7M1 8h10M5 8v6M9 8v6M5 3v5" fill="none" stroke="#a5a5a5" stroke-width="1.500"/><circle cx="14" cy="7" r="3" fill="#eee" stroke="#a5a5a5"/><path d="M13 10h2v4h-2z" fill="#aaa"/></svg></button>
					<button aria-label="Reveal constraints"><svg viewBox="0 0 18 16"><path d="M1.500 0v6M16.500 0v6M2 3h14" stroke="#3c4250"/><path d="M1 11.500h8" stroke="#3c4250" stroke-dasharray="2 1"/><path d="M10 8h7v5h-7z" fill="#444"/><path d="M11.500 8V6h4v2" fill="none" stroke="#444"/></svg></button>
					<button aria-label="Scroll left"><svg viewBox="0 0 18 16"><path d="M10 4L6 8l4 4" fill="none" stroke="#333" stroke-width="1.500"/></svg></button>
					<div class="hScroll"><div class="hThumb"></div></div>
				</div>
			</div>
		</div>

		<div class="statusBar">
			<span class="statusText">Structural Framing : TQS - Viga retangular : 19.0 x 200.0</span>
			<svg viewBox="0 0 16 16"><path d="M1.500 6.500l3-2 4 2v7l-4 2-3-2z" fill="#7cc0ee" stroke="#1468b4"/><path d="M5 3l2-2h4l1 2-2 1v3" fill="none" stroke="#5d5a20"/><path d="M13 8v8" stroke="#3c4278" stroke-width="2"/><path d="M10.500 5v3h5V5" fill="none" stroke="#3c4278"/></svg>
			<select class="workset" aria-label="Active workset" disabled><option></option></select>
			<svg class="filterIco" viewBox="0 0 16 16"><path d="M5.500 1.500h10v2l-3 3h-4l-3-3z" fill="#ddd" stroke="#8b8b8b"/><path d="M1 6h5l-1 9H1z" fill="#aaa"/><path d="M10 7L7 15" stroke="#999" stroke-width="2"/></svg>
			<span class="count">:0</span>
			<svg class="listIco" viewBox="0 0 16 16"><path d="M.500 1.500h15v14H.500z" fill="#fff" stroke="#3c4250"/><path d="M1 2h14v2H1z" fill="#6c727e"/><path d="M3 7h3M5 10h2M5 13h2M8 7h5M9 10h4M9 13h4" stroke="#222"/></svg>
			<svg class="optionIco" viewBox="0 0 16 16"><path d="M2 1h13v14H9V7H2z" fill="#9b9b9b"/><path d="M0 11h8M5 8l3 3-3 3" fill="none" stroke="#777"/></svg>
			<select class="option" aria-label="Design option"><option>Main Model</option></select>
			<label class="exclude"><input type="checkbox" checked>Exclude Options</label>
		</div>
	</div>
</div>
</body>
</html>
```

FILE: styles.css
```css
* {
  box-sizing: border-box;
}
body {
  margin: 0;
  background: #ededed;
  color: #333;
  font: 11px/15px "Open Sans", "Noto Sans", sans-serif;
}
button,
input,
select {
  font: inherit;
  color: inherit;
}
button {
  padding: 0;
  border: 0;
  background: none;
}
svg {
  flex: none;
}
.defs {
  position: absolute;
  width: 0;
  height: 0;
}
.page {
  display: flex;
  height: 100vh;
  overflow: hidden;
}
.caret {
  display: inline-block;
  border: 4px solid transparent;
  border-top-color: #333;
  border-bottom: 0;
}

/* scroll strip on the far left */
.sideStrip {
  flex: none;
  display: flex;
  flex-direction: column;
  width: 13px;
  background: #eff0f0;
}
.sideThumb {
  width: 11px;
  height: 175px;
  background: #c0c1c3;
}
.sideTrack {
  flex: 1;
  display: flex;
  align-items: flex-end;
  padding: 0 0 7px 1px;
  border-bottom: 1px solid #ccc;
}
.sideEnd {
  height: 49px;
  background: #fff;
}
.app {
  flex: 1;
  min-width: 0;
  display: flex;
  flex-direction: column;
}

/* ribbon */
.ribbon {
  flex: none;
  display: flex;
  height: 94px;
  border-bottom: 1px solid #c9c9c9;
  overflow: hidden;
}
.panel {
  flex: none;
  display: flex;
  flex-direction: column;
  justify-content: space-between;
  align-items: center;
  padding: 1px 1px 3px 0;
  border-right: 1px solid #d9d9d9;
}
.selectPanel {
  padding-left: 6px;
  padding-right: 5px;
}
.padded {
  padding-left: 8px;
  padding-right: 7px;
}
.openingPanel {
  padding-left: 1px;
  padding-right: 4px;
}
.datumPanel {
  padding-right: 4px;
}
.workPanel {
  flex: 1 0 auto;
  padding-right: 0;
  border-right: 0;
}
.tools {
  display: flex;
}
.tool {
  position: relative;
  height: 72px;
  padding-top: 3px;
  display: flex;
  flex-direction: column;
  align-items: center;
  text-align: center;
  white-space: nowrap;
}
.tool.active {
  padding-top: 2px;
  border: 1px solid #0f69c0;
  background: linear-gradient(#bcdcf4 30%, #b1d3ef 31%);
}
.tool:disabled {
  color: #b0b0b0;
}
.ico {
  width: 32px;
  height: 32px;
  margin-bottom: 3px;
}
.w30 { width: 30px; }
.w36 { width: 36px; }
.w38 { width: 38px; }
.w42 { width: 42px; }
.w44 { width: 44px; }
.w46 { width: 46px; }
.w48 { width: 48px; }
.w50 { width: 50px; }
.w54 { width: 54px; }
.w60 { width: 60px; }
.w68 { width: 68px; }
.w82 { width: 82px; }
.drop {
  margin-top: 3px;
  border: 3px solid transparent;
  border-top-color: #333;
  border-bottom: 0;
}
.side .drop {
  position: absolute;
  right: 4px;
  top: 50px;
}
.panelTitle {
  line-height: 15px;
}
.panelTitle .caret {
  margin: 0 0 2px 4px;
}
.optionsBar {
  flex: none;
  height: 28px;
  border-bottom: 2px solid #cacaca;
}

/* left dock */
.main {
  flex: 1;
  min-height: 0;
  display: flex;
}
.dock {
  flex: none;
  display: flex;
  flex-direction: column;
  width: 358px;
  border-right: 2px solid #ccc;
}
.dockTitle {
  display: flex;
  align-items: center;
  justify-content: space-between;
  height: 20px;
  padding: 0 3px 0 2px;
}
.close {
  display: flex;
  width: 10px;
}
.close svg {
  width: 10px;
  height: 10px;
  fill: none;
  stroke: #333;
  stroke-width: 2;
}
.properties {
  flex: none;
  padding-left: 1px;
  padding-right: 2px;
  border-bottom: 2px solid #ccc;
}
.typeBox {
  display: flex;
  align-items: center;
  height: 72px;
  padding: 0 1px 0 2px;
  border: 1px solid #cdcdcd;
  background: #efefef;
}
.thumb {
  display: flex;
  align-items: center;
  justify-content: center;
  width: 66px;
  height: 66px;
  border: 1px solid #ccc;
}
.thumb svg {
  width: 32px;
  height: 32px;
}
.typeName {
  flex: 1;
  padding-left: 4px;
  line-height: 16px;
}
.filterRow {
  display: flex;
  align-items: center;
  height: 25px;
  color: #000;
}
select {
  appearance: none;
  background: url("data:image/svg+xml,%3Csvg xmlns='http://www.w3.org/2000/svg' width='10' height='6'%3E%3Cpath d='M1 1l4 4 4-4' fill='none' stroke='%23555'/%3E%3C/svg%3E") no-repeat right 4px center;
}
.filter {
  width: 271px;
  height: 23px;
  padding: 0 3px;
  border: 1px solid #aaa;
  background-color: #e1e1e1;
}
.editType {
  display: flex;
  align-items: center;
  gap: 5px;
  padding: 0 0 3px 5px;
  white-space: nowrap;
}
.editType svg {
  width: 17px;
  height: 17px;
}
.gridArea {
  display: flex;
  height: 277px;
}
.gridScroll {
  flex: 1;
  overflow: hidden;
  background: #fff;
}
.propTab {
  width: 100%;
  table-layout: fixed;
  border-spacing: 0;
  color: #7a7a7a;
}
.valueCol {
  width: 161px;
}
.moreCol {
  width: 12px;
}
.propTab th {
  height: 18px;
  padding: 0 6px 0 2px;
  background: #d9d9d9;
  color: #111;
  font-weight: normal;
  text-align: left;
}
.groupHead {
  display: flex;
  justify-content: space-between;
  align-items: center;
  line-height: 18px;
}
.groupHead svg {
  width: 8px;
  height: 10px;
  fill: none;
  stroke: #000;
  stroke-width: 2;
}
.propTab td {
  height: 18px;
  padding: 0 0 1px 2px;
  border-right: 1px dotted #888;
  border-bottom: 1px dotted #888;
  line-height: 16px;
  white-space: nowrap;
}
.propTab td:first-child {
  padding-left: 8px;
}
.propTab .on {
  color: #000;
}
.propTab .field {
  padding: 0;
}
.field input,
.field button {
  display: block;
  width: 160px;
  height: 17px;
}
.field input {
  padding: 0 4px;
  border: 1px solid #000;
  background: #fff;
}
.editBtn {
  border: 1px solid #adadad;
  border-bottom-width: 2px;
  background: #e1e1e1;
  line-height: 14px;
}
.scrollBar {
  display: flex;
  flex-direction: column;
  width: 17px;
  background: #f0f0f0;
}
.scrollBar svg {
  width: 17px;
  height: 17px;
  fill: none;
  stroke: #505050;
  stroke-width: 2;
}
.scrollBar svg:last-child {
  margin-top: auto;
}
.scrollThumb {
  width: 15px;
  height: 86px;
  margin-left: 1px;
  background: #cdcdcd;
}
.propFoot {
  display: flex;
  justify-content: space-between;
  height: 27px;
  padding: 2px 2px 0;
}
.propFoot a {
  padding-top: 2px;
  color: #0563c1;
}
.apply {
  width: 73px;
  height: 21px;
  border: 1px solid #bfbfbf;
  background: #ccc;
  color: #888;
}

/* project browser */
.browser {
  flex: 1;
  min-height: 0;
  display: flex;
  flex-direction: column;
  padding: 0 2px 2px 1px;
}
.browser .dockTitle {
  flex: none;
}
.browser .tree {
  flex: 1;
  padding-left: 8px;
  background: #fff;
  color: #111;
}
.tree,
.tree ul {
  margin: 0;
  padding: 0;
  list-style: none;
}
.tree ul {
  padding-left: 19px;
}
.tree li {
  border-left: 1px dotted #999;
}
.tree li:last-child {
  border-left-color: transparent;
}
.row {
  display: flex;
  align-items: center;
  height: 18px;
  margin-left: -5px;
  white-space: nowrap;
}
.row svg {
  width: 16px;
  height: 16px;
  margin-right: 3px;
}
.row span {
  padding: 0 3px;
  line-height: 18px;
}
.row .picked {
  background: #dedede;
}
.toggle {
  width: 9px;
  height: 9px;
  border: 1px solid #919191;
  background: linear-gradient(#2b3c8c, #2b3c8c) center / 5px 1px no-repeat, linear-gradient(#2b3c8c, #2b3c8c) center / 1px 5px no-repeat, #fff;
}
.toggle.open {
  background: linear-gradient(#2b3c8c, #2b3c8c) center / 5px 1px no-repeat, #fff;
}
.dots {
  width: 5px;
  margin: 0 1px;
  border-top: 1px dotted #999;
}
.tree ul .dots {
  width: 8px;
}
.single .dots {
  width: 9px;
  margin-left: 6px;
}
.leaf .row {
  margin-left: 0;
}
.elbow {
  align-self: flex-start;
  width: 15px;
  height: 10px;
  margin-right: 3px;
  border: 1px dotted #999;
  border-width: 0 0 1px 1px;
}
.row b {
  color: #000;
}

/* view window */
.view {
  flex: 1;
  min-width: 0;
  display: flex;
  flex-direction: column;
  background: #fff;
}
.tabBar {
  flex: none;
  height: 20px;
  background: #ccc;
}
.tab {
  display: flex;
  align-items: center;
  width: 128px;
  height: 20px;
  padding: 0 5px;
  background: #fff;
}
.tab > svg {
  width: 16px;
  height: 16px;
}
.tab b {
  flex: 1;
  padding-left: 7px;
}
.drawing {
  flex: 1;
  min-height: 0;
  width: calc(100% - 2px);
  margin: 2px 0 0 2px;
}
.slabTop { fill: #ffe6cf; }
.slabBottom { fill: #d7d8ff; }
.beam { fill: #fffbf6; }
.pillarFill { fill: #d5e0d5; }
.edge,
.faint,
.dash,
.cross,
.hatchLine,
.jamb,
.jambDash,
.sill,
.leader {
  fill: none;
  stroke: #000;
}
.edge { stroke-width: 10; }
.faint {
  stroke: #332e29;
  stroke-width: 5;
}
.dash {
  stroke-width: 5;
  stroke-linecap: round;
  stroke-dasharray: 22 24.3;
}
.cross { stroke-width: 5; }
.hatchLine {
  stroke: #332e29;
  stroke-width: 5;
}
.jamb {
  stroke: #4a453f;
  stroke-width: 9;
}
.jambDash {
  stroke-width: 7;
  stroke-linecap: round;
}
.sill {
  stroke-width: 6;
  stroke-linecap: round;
}
.leader { stroke-width: 2; }
.size {
  font: 83px "Liberation Sans", Arial, sans-serif;
}
.mark {
  font: bold 124px "Liberation Sans", Arial, sans-serif;
}
.viewBar {
  flex: none;
  display: flex;
  align-items: center;
  gap: 3px;
  height: 17px;
  margin: 0 0 2px 2px;
  padding-left: 27px;
  background: #efefef;
  color: #000;
}
.scale {
  width: 48px;
}
.viewBar button {
  display: flex;
}
.viewBar button svg {
  width: 18px;
  height: 16px;
}
.hScroll {
  flex: 1;
  display: flex;
  justify-content: center;
}
.hThumb {
  width: 17px;
  height: 15px;
  margin-left: 226px;
  background: #ccc;
}

/* status bar */
.statusBar {
  flex: none;
  display: flex;
  height: 21px;
  padding: 4px 0 0 1px;
  overflow: hidden;
  background: #ccc;
  color: #000;
  line-height: 18px;
}
.statusBar svg {
  width: 16px;
  height: 16px;
  margin-top: 1px;
}
.statusText {
  flex: 1;
}
.statusBar select {
  flex: none;
  width: 204px;
  height: 18px;
  padding: 0 2px;
  border: 0;
  border-radius: 0;
  background-color: #fff;
  background-position: right 2px center;
}
.statusBar .workset {
  margin: 0 8px;
  opacity: .7;
  background-color: #fff;
}
.count {
  width: 32px;
  padding-left: 5px;
}
.statusBar .listIco {
  margin-left: 6px;
}
.statusBar .optionIco {
  margin: 1px 8px 0 10px;
}
.exclude {
  display: flex;
  gap: 3px;
  width: 215px;
  padding-left: 10px;
}
.exclude input {
  appearance: none;
  width: 14px;
  height: 14px;
  margin: 2px 0 0;
  border: 1px solid #555;
  background: #fff;
}
.exclude input:checked::before {
  content: "";
  display: block;
  width: 5px;
  height: 9px;
  margin: 0 auto;
  border: solid #4b5320;
  border-width: 0 2px 2px 0;
  transform: rotate(40deg);
}
```
